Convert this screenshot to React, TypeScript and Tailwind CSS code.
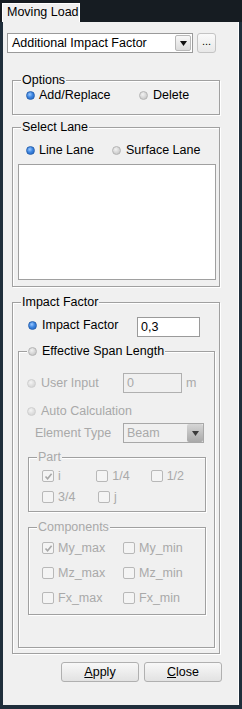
import React from "react";

const FONT = { fontFamily: '"Liberation Sans", Arial, sans-serif' };

function Radio({ checked = false, disabled = false }: { checked?: boolean; disabled?: boolean }) {
  if (checked) {
    return (
      <span className="inline-block w-[9px] h-[9px] rounded-full shrink-0 border border-[#2a63b0] bg-[radial-gradient(circle_at_40%_35%,#9cc8ff_0%,#3d86e0_45%,#1d5fc0_100%)]" />
    );
  }
  return (
    <span
      className={
        disabled
          ? "inline-block w-[9px] h-[9px] rounded-full shrink-0 border border-[#cfcfcf] bg-[radial-gradient(circle_at_40%_35%,#f4f4f4_0%,#dcdcdc_60%,#cfcfcf_100%)]"
          : "inline-block w-[9px] h-[9px] rounded-full shrink-0 border border-[#b4b4b4] bg-[radial-gradient(circle_at_40%_35%,#f2f2f2_0%,#d2d2d2_60%,#bdbdbd_100%)]"
      }
    />
  );
}

function Check({ checked = false }: { checked?: boolean }) {
  return (
    <span className="inline-flex items-center justify-center w-[12px] h-[12px] rounded-[2px] shrink-0 border border-[#b8b8b8] bg-[#f4f4f4]">
      {checked && (
        <svg width="9" height="9" viewBox="0 0 9 9">
          <path d="M1.5 4.5 L3.6 6.8 L7.6 1.8" fill="none" stroke="#a8a8a8" strokeWidth="1.6" />
        </svg>
      )}
    </span>
  );
}

function Group({
  label,
  className,
  children,
}: {
  label: React.ReactNode;
  className: string;
  children: React.ReactNode;
}) {
  return (
    <div className={"relative border border-[#a0a0a0] shadow-[inset_1px_1px_0_#ffffff,1px_1px_0_#ffffff] " + className}>
      <div className="absolute left-[8px] top-[-8px] px-[1px] bg-[#f0f0f0] leading-[14px] text-[12.5px] flex items-center">
        {label}
      </div>
      {children}
    </div>
  );
}

function CheckItem({ checked = false, text, w }: { checked?: boolean; text: string; w: string }) {
  return (
    <div className={"flex items-center gap-[4px] " + w}>
      <Check checked={checked} />
      <span className="text-[12.5px] leading-[12px] text-[#a9a9a9]">{text}</span>
    </div>
  );
}

export default function App() {
  return (
    <div style={FONT} className="w-[242px] h-[709px] bg-[#1f2e3b] flex flex-col text-black select-none">
      {/* tab strip */}
      <div className="h-[22px] bg-[#161c22] flex items-end pl-[2px] shrink-0">
        <div className="w-[78px] h-[19px] bg-[#f0f0f0] border-t border-l border-r border-white text-[12.5px] leading-[17px] pl-[4px]">
          Moving Load
        </div>
      </div>

      {/* panel */}
      <div className="ml-[3px] mr-[3px] mb-[4px] flex-1 bg-[#f0f0f0] border-r border-white flex flex-col">
        {/* combo row */}
        <div className="flex items-center mt-[11px] ml-[4px] gap-[4px]">
          <div className="w-[186px] h-[20px] bg-white border border-[#9a9a9a] flex items-center">
            <span className="flex-1 text-[12.5px] pl-[4px] leading-[18px]">Additional Impact Factor</span>
            <span className="w-[16px] h-[16px] mr-[1px] rounded-[2px] border border-[#b8b8b8] bg-[linear-gradient(#f8f8f8,#dcdcdc)] flex items-center justify-center">
              <svg width="7" height="5" viewBox="0 0 7 5">
                <path d="M0 0 L7 0 L3.5 5 Z" fill="#111" />
              </svg>
            </span>
          </div>
          <div className="w-[19px] h-[20px] rounded-[3px] border border-[#c4c4c4] bg-[linear-gradient(#fafafa,#e8e8e8)] text-[11px] leading-[14px] text-center">
            ...
          </div>
        </div>

        {/* Options */}
        <Group label={<span>Options</span>} className="ml-[9px] w-[208px] h-[35px] mt-[27px]">
          <div className="flex items-center pl-[13px] pt-[7px] text-[12.5px] leading-[14px]">
            <div className="flex items-center gap-[4px] w-[113px]">
              <Radio checked />
              <span>Add/Replace</span>
            </div>
            <div className="flex items-center gap-[5px]">
              <Radio />
              <span>Delete</span>
            </div>
          </div>
        </Group>

        {/* Select Lane */}
        <Group label={<span>Select Lane</span>} className="ml-[9px] w-[208px] h-[160px] mt-[12px]">
          <div className="flex items-center pl-[13px] pt-[15px] text-[12.5px] leading-[14px]">
            <div className="flex items-center gap-[4px] w-[86px]">
              <Radio checked />
              <span>Line Lane</span>
            </div>
            <div className="flex items-center gap-[5px]">
              <Radio />
              <span>Surface Lane</span>
            </div>
          </div>
          <div className="ml-[5px] mt-[7px] w-[198px] h-[116px] bg-white border border-[#a0a0a0]" />
        </Group>

        {/* Impact Factor */}
        <Group label={<span>Impact Factor</span>} className="ml-[9px] w-[208px] h-[352px] mt-[15px]">
          <div className="flex items-start pl-[15px] pt-[14px] text-[12.5px] leading-[14px]">
            <div className="flex items-center gap-[5px] w-[109px] pt-[1px]">
              <Radio checked />
              <span>Impact Factor</span>
            </div>
            <div className="w-[63px] h-[20px] bg-white border border-[#9a9a9a] pl-[3px] leading-[18px]">0,3</div>
          </div>

          {/* Effective Span Length */}
          <Group
            label={
              <span className="flex items-center gap-[5px] text-black">
                <Radio />
                <span>Effective Span Length</span>
              </span>
            }
            className="ml-[5px] mt-[14px] w-[197px] h-[297px]"
          >
            <div className="flex items-center pl-[8px] pt-[21px] text-[12.5px] leading-[14px] text-[#a9a9a9]">
              <div className="flex items-center gap-[5px] w-[96px]">
                <Radio disabled />
                <span>User Input</span>
              </div>
              <div className="w-[59px] h-[20px] border border-[#b0b0b0] bg-[#f0f0f0] pl-[3px] leading-[18px]">0</div>
              <span className="ml-[4px]">m</span>
            </div>
            <div className="flex items-center gap-[5px] pl-[8px] mt-[11px] text-[12.5px] leading-[14px] text-[#a9a9a9]">
              <Radio disabled />
              <span>Auto Calculation</span>
            </div>
            <div className="flex items-center pl-[16px] mt-[5px] text-[12.5px] text-[#a9a9a9]">
              <span className="w-[88px]">Element Type</span>
              <div className="w-[81px] h-[20px] border border-[#a8a8a8] flex items-center">
                <span className="flex-1 pl-[3px] leading-[18px]">Beam</span>
                <span className="w-[16px] h-[18px] rounded-[2px] bg-[linear-gradient(#d6d6d6,#a9a9a9)] flex items-center justify-center">
                  <svg width="7" height="5" viewBox="0 0 7 5">
                    <path d="M0 0 L7 0 L3.5 5 Z" fill="#3a3a3a" />
                  </svg>
                </span>
              </div>
            </div>

            {/* Part */}
            <Group label={<span className="text-[#a9a9a9]">Part</span>} className="ml-[9px] mt-[14px] w-[178px] h-[55px]">
              <div className="pl-[13px] pt-[12px] flex flex-col gap-[9px]">
                <div className="flex">
                  <CheckItem checked text="i" w="w-[56px]" />
                  <CheckItem text="1/4" w="w-[56px]" />
                  <CheckItem text="1/2" w="w-[56px]" />
                </div>
                <div className="flex">
                  <CheckItem text="3/4" w="w-[56px]" />
                  <CheckItem text="j" w="w-[56px]" />
                </div>
              </div>
            </Group>

            {/* Components */}
            <Group label={<span className="text-[#a9a9a9]">Components</span>} className="ml-[9px] mt-[15px] w-[178px] h-[88px]">
              <div className="pl-[13px] pt-[14px] flex flex-col gap-[13px]">
                <div className="flex">
                  <CheckItem checked text="My_max" w="w-[81px]" />
                  <CheckItem text="My_min" w="w-[81px]" />
                </div>
                <div className="flex">
                  <CheckItem text="Mz_max" w="w-[81px]" />
                  <CheckItem text="Mz_min" w="w-[81px]" />
                </div>
                <div className="flex">
                  <CheckItem text="Fx_max" w="w-[81px]" />
                  <CheckItem text="Fx_min" w="w-[81px]" />
                </div>
              </div>
            </Group>
          </Group>
        </Group>

        {/* buttons */}
        <div className="flex gap-[5px] mt-[8px] ml-[58px]">
          <button className="w-[78px] h-[20px] rounded-[3px] border border-[#b0b0b0] bg-[linear-gradient(#f8f8f8,#e2e2e2)] text-[12.5px] leading-[18px]">
            <span className="underline">A</span>pply
          </button>
          <button className="w-[78px] h-[20px] rounded-[3px] border border-[#b0b0b0] bg-[linear-gradient(#f8f8f8,#e2e2e2)] text-[12.5px] leading-[18px]">
            <span className="underline">C</span>lose
          </button>
        </div>
      </div>
    </div>
  );
}
